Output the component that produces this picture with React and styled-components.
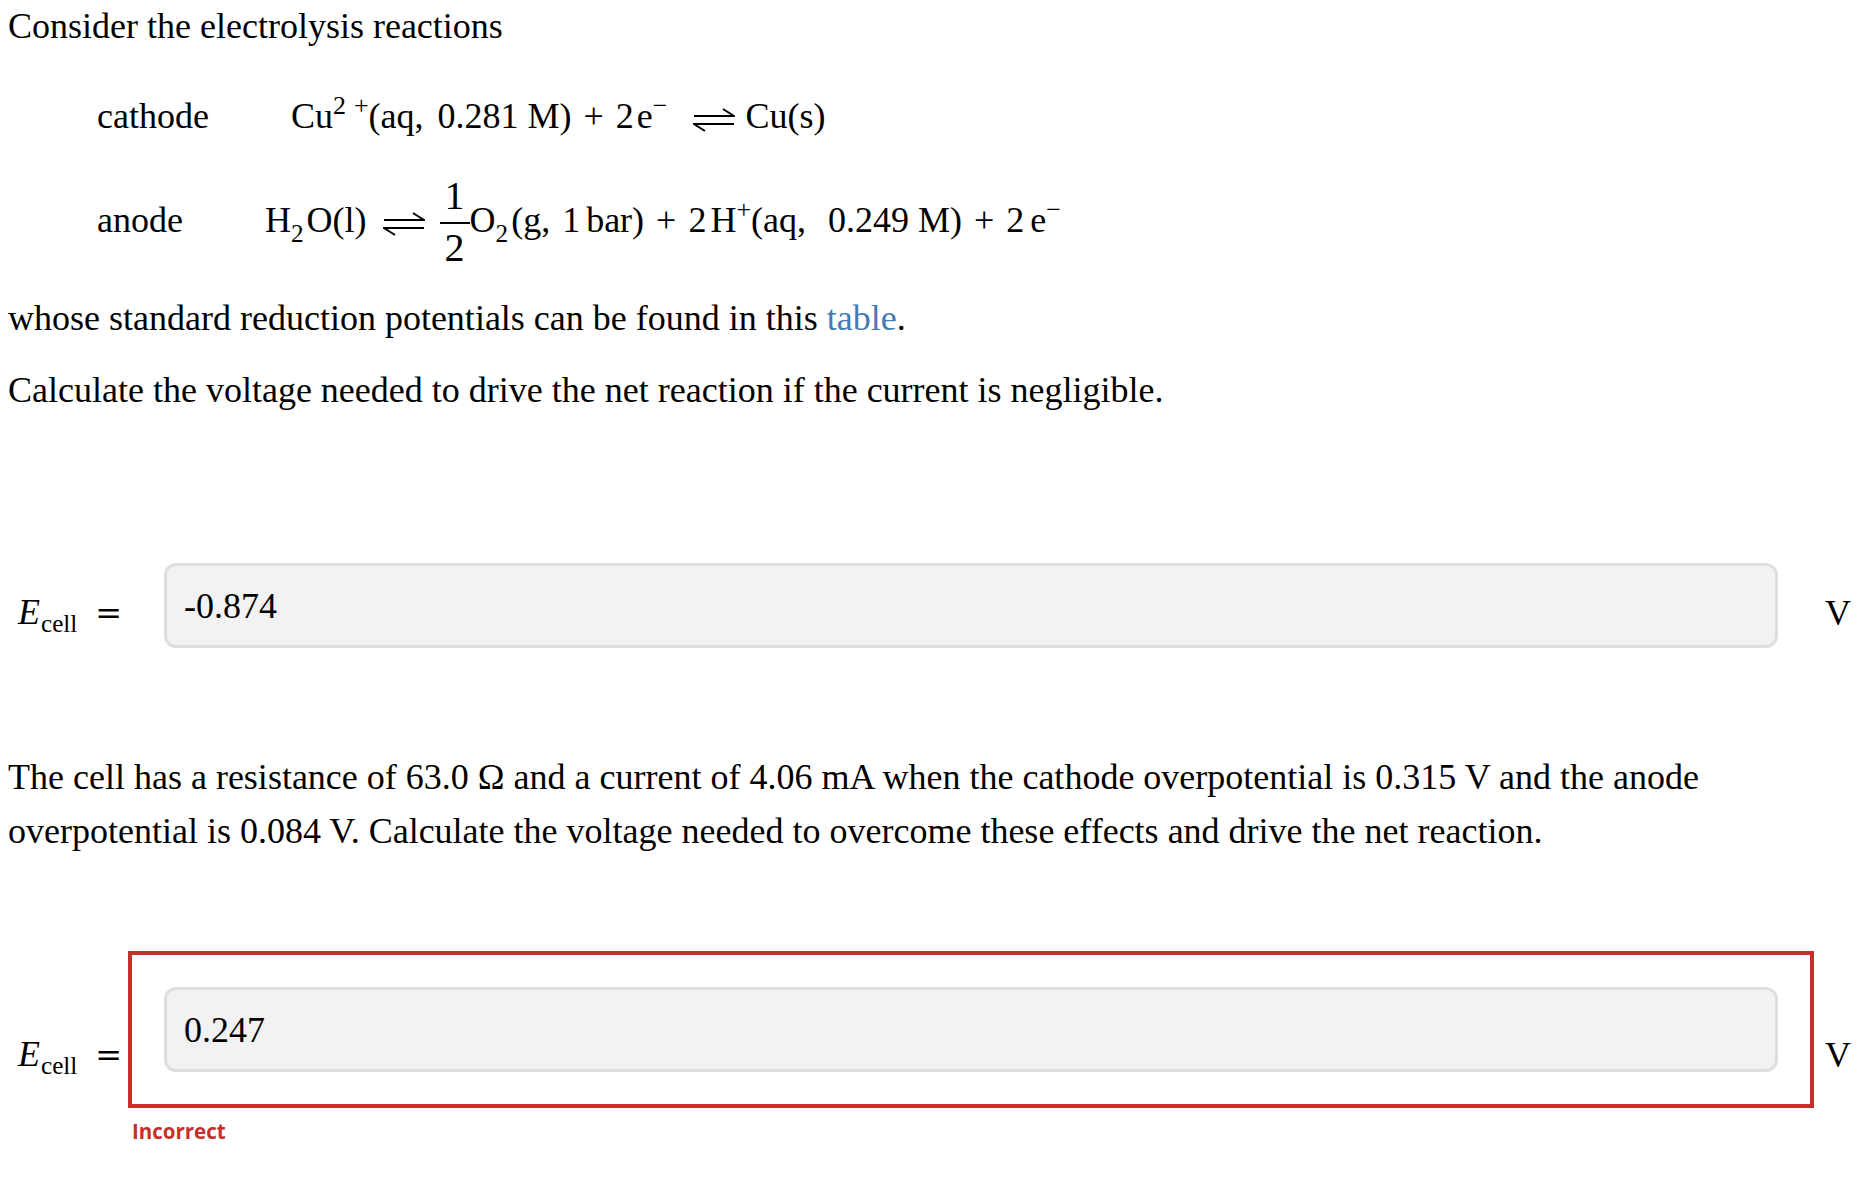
import React from "react";
import styled, { createGlobalStyle } from "styled-components";

const GlobalStyle = createGlobalStyle`
  body {
    margin: 0;
    background: #ffffff;
  }
`;

const Page = styled.main`
  padding: 0 8px;
  font-family: "Liberation Serif", "Times New Roman", serif;
  font-size: 36px;
  line-height: 54px;
  color: #000;
`;

const Intro = styled.p`
  margin: 4px 0 0;
  line-height: 44px;
`;

const Text = styled.p`
  margin: ${(p) => p.$top}px 0 0;
`;

const Link = styled.a`
  color: #437bb5;
  text-decoration: none;
`;

const Reactions = styled.div`
  display: flex;
  flex-direction: column;
  gap: 33px;
  margin-top: 41px;
  padding-left: 89px;
`;

const ReactionRow = styled.div`
  display: flex;
  align-items: baseline;
  gap: 82px;
  white-space: nowrap;
`;

const Equation = styled.span`
  white-space: nowrap;
`;

const Sup = styled.span`
  font-size: 0.72em;
  line-height: 0;
  vertical-align: 0.55em;
  margin-left: ${(p) => p.$left || 0}px;
  margin-right: ${(p) => p.$right || 0}px;
`;

const Sub = styled.span`
  font-size: 0.7em;
  line-height: 0;
  vertical-align: -0.4em;
  margin-right: 3px;
`;

const Space = styled.span`
  display: inline-block;
  width: ${(p) => p.$w}px;
`;

const Op = styled.span`
  margin: 0 12px;
`;

const Frac = styled.span`
  display: inline-flex;
  flex-direction: column;
  align-items: stretch;
  text-align: center;
  font-size: 40px;
  line-height: 40px;
  vertical-align: 23px;
  margin-left: 5px;
`;

const Num = styled.span`
  padding: 0 5px 6px;
  border-bottom: 2px solid currentColor;
`;

const Den = styled.span`
  padding: 4px 5px 0;
`;

const ArrowSvg = styled.svg`
  width: 42px;
  height: 26px;
  vertical-align: -5px;
  margin: 0 10px 0 16px;
`;

const AnswerRow = styled.div`
  display: flex;
  align-items: center;
  padding-left: 10px;
  margin-top: ${(p) => p.$top}px;
`;

const Label = styled.div`
  flex: 0 0 110px;
  margin-top: 14px;
  white-space: nowrap;
`;

const Var = styled.span`
  font-style: italic;
  letter-spacing: 1px;
`;

const CellSub = styled.span`
  font-size: 0.7em;
  line-height: 0;
  vertical-align: -0.3em;
`;

const Equals = styled.span`
  margin-left: 18px;
  font-family: "DejaVu Serif", serif;
  font-size: 32px;
`;

const FieldColumn = styled.div`
  flex: 1;
  display: flex;
  flex-direction: column;
`;

const FieldFrame = styled.div`
  border: 4px solid ${(p) => (p.$incorrect ? "#c4302b" : "transparent")};
  padding: 32px;
`;

const Input = styled.input`
  box-sizing: border-box;
  width: 100%;
  height: 85px;
  padding: 0 17px;
  border: 3px solid #dedede;
  border-radius: 12px;
  background: #f2f2f2;
  font-family: "Liberation Serif", "Times New Roman", serif;
  font-size: 36px;
  color: #000;
  outline: none;
`;

const Feedback = styled.div`
  margin: 10px 0 0 4px;
  font-family: "Open Sans", "Liberation Sans", sans-serif;
  font-weight: 700;
  font-size: 20.5px;
  line-height: 26px;
  color: #c4302b;
`;

const Unit = styled.div`
  margin: 14px 17px 0 11px;
`;

const Equilibrium = () => (
  <ArrowSvg viewBox="0 0 42 26" fill="none" stroke="currentColor" strokeWidth="2">
    <path d="M1 9H41L30 2" />
    <path d="M41 17H1L12 24" />
  </ArrowSvg>
);

const Ecell = () => (
  <Label>
    <Var>E</Var>
    <CellSub>cell</CellSub>
    <Equals>=</Equals>
  </Label>
);

const AnswerField = ({ top, value, incorrect }) => (
  <AnswerRow $top={top}>
    <Ecell />
    <FieldColumn>
      <FieldFrame $incorrect={incorrect}>
        <Input readOnly defaultValue={value} />
      </FieldFrame>
      {incorrect && <Feedback>Incorrect</Feedback>}
    </FieldColumn>
    <Unit>V</Unit>
  </AnswerRow>
);

export default function App() {
  return (
    <Page>
      <GlobalStyle />
      <Intro>Consider the electrolysis reactions</Intro>

      <Reactions>
        <ReactionRow>
          <span>cathode</span>
          <Equation>
            Cu<Sup>2</Sup>
            <Sup $left={8}>+</Sup>(aq,<Space $w={14} />0.281 M)<Op>+</Op>2<Space $w={3} />e
            <Sup $right={10}>−</Sup>
            <Equilibrium />
            Cu(s)
          </Equation>
        </ReactionRow>
        <ReactionRow>
          <span>anode</span>
          <Equation>
            H<Sub>2</Sub>O(l)
            <Equilibrium />
            <Frac>
              <Num>1</Num>
              <Den>2</Den>
            </Frac>
            O<Sub>2</Sub>(g,<Space $w={12} />1<Space $w={6} />bar)<Op>+</Op>2<Space $w={4} />H
            <Sup>+</Sup>(aq,<Space $w={22} />0.249 M)<Op>+</Op>2<Space $w={6} />e<Sup>−</Sup>
          </Equation>
        </ReactionRow>
      </Reactions>

      <Text $top={23}>
        whose standard reduction potentials can be found in this <Link href="#">table</Link>.
      </Text>
      <Text $top={18}>
        Calculate the voltage needed to drive the net reaction if the current is negligible.
      </Text>

      <AnswerField top={110} value="-0.874" />

      <Text $top={66}>
        The cell has a resistance of 63.0 Ω and a current of 4.06 mA when the cathode
        overpotential is 0.315 V and the anode overpotential is 0.084 V. Calculate the voltage
        needed to overcome these effects and drive the net reaction.
      </Text>

      <AnswerField top={93} value="0.247" incorrect />
    </Page>
  );
}
